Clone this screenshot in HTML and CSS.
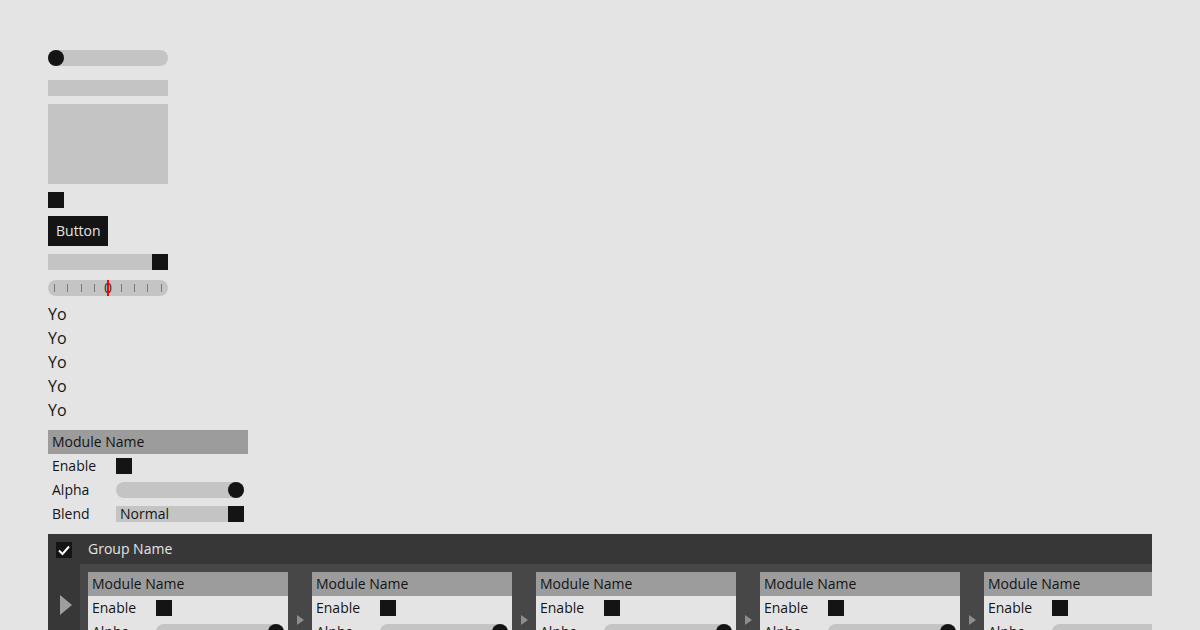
FILE: index.html
```html
<!DOCTYPE html>
<html>
<head>
<meta charset="utf-8">
<link rel="stylesheet" href="styles.css">
</head>
<body>
<div class="page">
  <div class="slider slider-first"><span class="knob"></span></div>
  <div class="bar"></div>
  <div class="box"></div>
  <div class="check"></div>
  <div class="button">Button</div>
  <div class="sq-slider"><span class="sq"></span></div>
  <div class="ticks">
    <span class="tick"></span><span class="tick"></span><span class="tick"></span><span class="tick"></span>
    <span class="tick center"><span class="zero">0</span><span class="redline"></span></span>
    <span class="tick"></span><span class="tick"></span><span class="tick"></span><span class="tick"></span>
  </div>
  <div class="yos">
    <div>Yo</div><div>Yo</div><div>Yo</div><div>Yo</div><div>Yo</div>
  </div>

  <div class="module solo">
    <div class="mod-head">Module Name</div>
    <div class="row"><span class="lbl">Enable</span><span class="ctl"><span class="check small"></span></span></div>
    <div class="row"><span class="lbl">Alpha</span><span class="ctl"><span class="slider wide"><span class="knob right"></span></span></span></div>
    <div class="row"><span class="lbl">Blend</span><span class="ctl"><span class="dropdown"><span class="dd-text">Normal</span><span class="sq"></span></span></span></div>
  </div>

  <div class="group">
    <div class="group-head">
      <span class="gcheck"><svg width="16" height="16" viewBox="0 0 16 16"><polyline points="3,8.5 6.5,12 13,4.5" fill="none" stroke="#ffffff" stroke-width="2"/></svg></span>
      <span class="gname">Group Name</span>
    </div>
    <div class="group-body">
      <div class="gutter"><svg width="12" height="20" viewBox="0 0 12 20"><polygon points="0,0 12,10 0,20" fill="#9e9e9e"/></svg></div>
      <div class="modules">
        <div class="module"><div class="mod-head">Module Name</div><div class="row"><span class="lbl">Enable</span><span class="ctl"><span class="check small"></span></span></div><div class="row"><span class="lbl">Alpha</span><span class="ctl"><span class="slider wide"><span class="knob right"></span></span></span></div><div class="row"><span class="lbl">Blend</span><span class="ctl"><span class="dropdown"><span class="dd-text">Normal</span><span class="sq"></span></span></span></div></div>
        <div class="link"><svg width="7" height="10" viewBox="0 0 7 10"><polygon points="0,0 7,5 0,10" fill="#8e8e8e"/></svg></div>
        <div class="module"><div class="mod-head">Module Name</div><div class="row"><span class="lbl">Enable</span><span class="ctl"><span class="check small"></span></span></div><div class="row"><span class="lbl">Alpha</span><span class="ctl"><span class="slider wide"><span class="knob right"></span></span></span></div><div class="row"><span class="lbl">Blend</span><span class="ctl"><span class="dropdown"><span class="dd-text">Normal</span><span class="sq"></span></span></span></div></div>
        <div class="link"><svg width="7" height="10" viewBox="0 0 7 10"><polygon points="0,0 7,5 0,10" fill="#8e8e8e"/></svg></div>
        <div class="module"><div class="mod-head">Module Name</div><div class="row"><span class="lbl">Enable</span><span class="ctl"><span class="check small"></span></span></div><div class="row"><span class="lbl">Alpha</span><span class="ctl"><span class="slider wide"><span class="knob right"></span></span></span></div><div class="row"><span class="lbl">Blend</span><span class="ctl"><span class="dropdown"><span class="dd-text">Normal</span><span class="sq"></span></span></span></div></div>
        <div class="link"><svg width="7" height="10" viewBox="0 0 7 10"><polygon points="0,0 7,5 0,10" fill="#8e8e8e"/></svg></div>
        <div class="module"><div class="mod-head">Module Name</div><div class="row"><span class="lbl">Enable</span><span class="ctl"><span class="check small"></span></span></div><div class="row"><span class="lbl">Alpha</span><span class="ctl"><span class="slider wide"><span class="knob right"></span></span></span></div><div class="row"><span class="lbl">Blend</span><span class="ctl"><span class="dropdown"><span class="dd-text">Normal</span><span class="sq"></span></span></span></div></div>
        <div class="link"><svg width="7" height="10" viewBox="0 0 7 10"><polygon points="0,0 7,5 0,10" fill="#8e8e8e"/></svg></div>
        <div class="module"><div class="mod-head">Module Name</div><div class="row"><span class="lbl">Enable</span><span class="ctl"><span class="check small"></span></span></div><div class="row"><span class="lbl">Alpha</span><span class="ctl"><span class="slider wide"><span class="knob right"></span></span></span></div><div class="row"><span class="lbl">Blend</span><span class="ctl"><span class="dropdown"><span class="dd-text">Normal</span><span class="sq"></span></span></span></div></div>
      </div>
    </div>
  </div>
</div>
</body>
</html>
```

FILE: styles.css
```css
* { box-sizing: border-box; }
html, body { margin: 0; padding: 0; }
body {
  background: #e4e4e4;
  font-family: "Open Sans", "Liberation Sans", sans-serif;
  color: #141414;
  overflow: hidden;
  width: 1200px;
  height: 630px;
}
.page {
  padding: 50px 0 0 48px;
  display: flex;
  flex-direction: column;
  align-items: flex-start;
}
.slider {
  display: flex;
  width: 120px;
  height: 16px;
  border-radius: 8px;
  background: #c4c4c4;
}
.slider-first { margin-bottom: 14px; }
.knob {
  width: 16px;
  height: 16px;
  border-radius: 50%;
  background: #141414;
}
.knob.right { margin-left: auto; }
.slider.wide { width: 128px; }
.bar {
  width: 120px;
  height: 16px;
  background: #c4c4c4;
  margin-bottom: 8px;
}
.box {
  width: 120px;
  height: 80px;
  background: #c4c4c4;
  margin-bottom: 8px;
}
.check {
  display: block;
  width: 16px;
  height: 16px;
  background: #141414;
  margin-bottom: 8px;
}
.check.small { margin: 0; }
.button {
  width: 60px;
  height: 30px;
  background: #141414;
  color: #e4e4e4;
  font-size: 14px;
  line-height: 30px;
  padding-left: 8px;
  margin-bottom: 8px;
}
.sq-slider {
  display: flex;
  justify-content: flex-end;
  width: 120px;
  height: 16px;
  background: #c4c4c4;
  margin-bottom: 10px;
}
.sq {
  width: 16px;
  height: 16px;
  background: #141414;
  flex-shrink: 0;
}
.ticks {
  display: flex;
  width: 120px;
  height: 16px;
  border-radius: 8px;
  background: #c4c4c4;
  margin-bottom: 6px;
}
.tick {
  flex: 1;
  position: relative;
  display: flex;
  justify-content: center;
  align-items: center;
}
.tick::before {
  content: "";
  width: 1px;
  height: 8px;
  background: #7a7a7a;
}
.tick.center::before { display: none; }
.zero {
  font-size: 14px;
  line-height: 16px;
  color: #2a2a2a;
}
.redline {
  position: absolute;
  left: 50%;
  top: 0;
  width: 1.5px;
  height: 16px;
  margin-left: -0.75px;
  background: #ff0000;
}
.yos {
  font-size: 16px;
  line-height: 24px;
  margin-bottom: 8px;
}
.module {
  width: 200px;
  flex-shrink: 0;
  background: #e4e4e4;
}
.module.solo { margin-bottom: 8px; }
.mod-head {
  height: 24px;
  background: #9c9c9c;
  font-size: 14px;
  line-height: 24px;
  padding-left: 4px;
  white-space: nowrap;
}
.row {
  display: flex;
  align-items: center;
  height: 24px;
  font-size: 14px;
}
.lbl {
  width: 68px;
  padding-left: 4px;
  line-height: 24px;
}
.ctl {
  width: 128px;
  display: flex;
  align-items: center;
}
.dropdown {
  display: flex;
  width: 128px;
  height: 16px;
  background: #c4c4c4;
}
.dd-text {
  flex: 1;
  padding-left: 4px;
  font-size: 14px;
  line-height: 16px;
}
.group {
  width: 1104px;
  background: #373737;
  overflow: hidden;
}
.group-head {
  display: flex;
  align-items: flex-start;
  height: 30px;
}
.gcheck {
  width: 16px;
  height: 16px;
  margin: 8px 0 0 8px;
  background: #141414;
  display: flex;
}
.gname {
  margin-left: 16px;
  color: #e4e4e4;
  font-size: 14px;
  line-height: 30px;
}
.group-body {
  display: flex;
}
.gutter {
  width: 32px;
  flex-shrink: 0;
  padding: 31px 0 0 12px;
}
.gutter svg { display: block; }
.modules {
  flex: 1;
  display: flex;
  background: #474747;
  padding: 8px 0 8px 8px;
}
.link {
  width: 24px;
  flex-shrink: 0;
  display: flex;
  align-items: center;
  padding-left: 9px;
}
.link svg { display: block; }
```
